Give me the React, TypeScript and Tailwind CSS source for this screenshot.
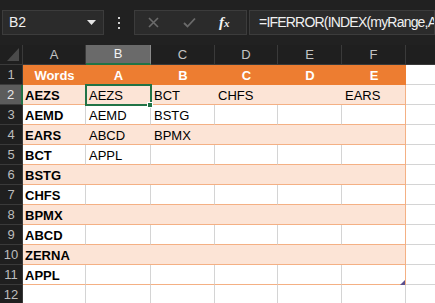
import React from 'react';

const widths = ['w-[63px]', 'w-[65px]', 'w-[64px]', 'w-[63px]', 'w-[64px]', 'w-[64px]'];
const letters = ['A', 'B', 'C', 'D', 'E', 'F'];
const heads = ['Words', 'A', 'B', 'C', 'D', 'E'];

const rows: string[][] = [
  ['AEZS', 'AEZS', 'BCT', 'CHFS', '', 'EARS'],
  ['AEMD', 'AEMD', 'BSTG', '', '', ''],
  ['EARS', 'ABCD', 'BPMX', '', '', ''],
  ['BCT', 'APPL', '', '', '', ''],
  ['BSTG', '', '', '', '', ''],
  ['CHFS', '', '', '', '', ''],
  ['BPMX', '', '', '', '', ''],
  ['ABCD', '', '', '', '', ''],
  ['ZERNA', '', '', '', '', ''],
  ['APPL', '', '', '', '', ''],
];

function RowHead({ n, active }: { n: number; active?: boolean }) {
  return (
    <div
      className={
        active
          ? 'w-[23px] shrink-0 h-full flex items-center justify-center bg-[#5c5c5c] text-[#e8e8e8] border-b border-[#3a3a3a] border-r-2 border-r-[#217346] text-[13px]'
          : 'w-[23px] shrink-0 h-full flex items-center justify-center bg-[#1f1f1f] text-[#bdbdbd] border-b border-r border-[#3a3a3a] text-[13px]'
      }
    >
      {n}
    </div>
  );
}

export default function App() {
  return (
    <div
      className="w-[435px] h-[303px] overflow-hidden bg-[#212121] text-[13px]"
      style={{ fontFamily: '"Liberation Sans", Arial, sans-serif' }}
    >
      {/* formula bar */}
      <div className="h-[45px] flex items-center">
        <div className="ml-[2px] w-[102px] h-[25px] bg-[#2b2b2b] border border-[#3c3c3c] flex items-center justify-between pl-[6px] pr-[7px]">
          <span className="text-[#f0f0f0] text-[14px]">B2</span>
          <svg width="9" height="5" viewBox="0 0 9 5">
            <polygon points="0,0 9,0 4.5,5" fill="#e6e6e6" />
          </svg>
        </div>
        <div className="w-[30px] flex flex-col items-center gap-[3px]">
          <div className="w-[2px] h-[2px] bg-[#cfcfcf]" />
          <div className="w-[2px] h-[2px] bg-[#cfcfcf]" />
          <div className="w-[2px] h-[2px] bg-[#cfcfcf]" />
        </div>
        <div className="w-[113px] h-[25px] bg-[#2b2b2b] border border-[#3c3c3c] flex items-center">
          <svg className="ml-[13px]" width="11" height="11" viewBox="0 0 11 11">
            <path d="M1 1 L10 10 M10 1 L1 10" stroke="#6b6b6b" strokeWidth="1.6" />
          </svg>
          <svg className="ml-[24px]" width="13" height="11" viewBox="0 0 13 11">
            <path d="M1 6 L4.5 9.5 L12 1.5" stroke="#6b6b6b" strokeWidth="1.8" fill="none" />
          </svg>
          <span
            className="ml-[23px] text-[#f2f2f2] italic font-bold text-[15px] leading-none"
            style={{ fontFamily: '"Liberation Serif", serif' }}
          >
            f<span className="text-[11px]">x</span>
          </span>
        </div>
        <div className="ml-[2px] flex-1 min-w-0 h-[25px] bg-[#2b2b2b] border border-[#3c3c3c] flex items-center pl-[9px] overflow-hidden whitespace-nowrap">
          <span className="text-[#f0f0f0] text-[14px] tracking-[-0.8px]">=IFERROR(INDEX(myRange,A</span>
        </div>
      </div>

      {/* grid */}
      <div className="relative">
        {/* column headers */}
        <div className="flex h-[20px]">
          <div className="w-[23px] shrink-0 h-full bg-[#1f1f1f] border-r border-b border-[#3a3a3a] flex items-end justify-end pr-[3px] pb-[3px]">
            <svg width="12" height="13" viewBox="0 0 12 13">
              <polygon points="0,13 12,13 12,0" fill="#4a4a4a" />
            </svg>
          </div>
          {letters.map((l, i) => (
            <div
              key={l}
              className={
                i === 1
                  ? `${widths[i]} shrink-0 h-full flex items-center justify-center bg-[#6a6a6a] text-[#f2f2f2] border-b-2 border-b-[#217346] border-r border-r-[#8a8a8a]`
                  : `${widths[i]} shrink-0 h-full flex items-center justify-center bg-[#1f1f1f] text-[#c4c4c4] border-b border-r border-[#3a3a3a]`
              }
            >
              {l}
            </div>
          ))}
          <div className="flex-1 h-full bg-[#1f1f1f] border-b border-[#3a3a3a]" />
        </div>

        {/* row 1 table header */}
        <div className="flex h-[20px]">
          <RowHead n={1} />
          {heads.map((h, i) => (
            <div
              key={i}
              className={`${widths[i]} shrink-0 h-full bg-[#ed7d31] text-white font-bold flex items-center justify-center leading-[20px] pt-[1px]`}
            >
              {h}
            </div>
          ))}
          <div className="flex-1 h-full bg-white border-b border-[#d4d4d4]" />
        </div>

        {rows.map((r, ri) => {
          const shaded = ri % 2 === 0;
          return (
            <div key={ri} className="flex h-[20px]">
              <RowHead n={ri + 2} active={ri === 0} />
              {r.map((c, ci) => (
                <div
                  key={ci}
                  className={
                    (shaded
                      ? `${widths[ci]} shrink-0 h-full bg-[#fce4d6] border-b border-[#f4b084] `
                      : `${widths[ci]} shrink-0 h-full bg-white border-b border-b-[#f4b084] border-r border-r-[#d4d4d4] `) +
                    (ci === 5 ? 'border-r border-r-[#f4b084] ' : '') +
                    (ci === 0 ? 'font-bold pl-[2px] ' : 'pl-[3px] ') +
                    'text-black leading-[20px] pt-[1px] whitespace-nowrap'
                  }
                >
                  {c}
                </div>
              ))}
              <div className="flex-1 h-full bg-white border-b border-[#d4d4d4]" />
            </div>
          );
        })}

        {/* row 12 */}
        <div className="flex h-[20px]">
          <RowHead n={12} />
          {widths.map((w, i) => (
            <div key={i} className={`${w} shrink-0 h-full bg-white border-r border-b border-[#d4d4d4]`} />
          ))}
          <div className="flex-1 h-full bg-white border-b border-[#d4d4d4]" />
        </div>

        {/* selection on B2 */}
        <div className="absolute left-[85px] top-[39px] w-[67px] h-[22px] border-2 border-[#217346]" />
        <div className="absolute left-[147px] top-[57px] w-[6px] h-[6px] bg-[#217346] border border-white" />

        {/* table resize handle */}
        <svg className="absolute left-[400px] top-[235px]" width="5" height="5" viewBox="0 0 5 5">
          <polygon points="0,5 5,5 5,0" fill="#5a4f8e" />
        </svg>
      </div>
    </div>
  );
}
